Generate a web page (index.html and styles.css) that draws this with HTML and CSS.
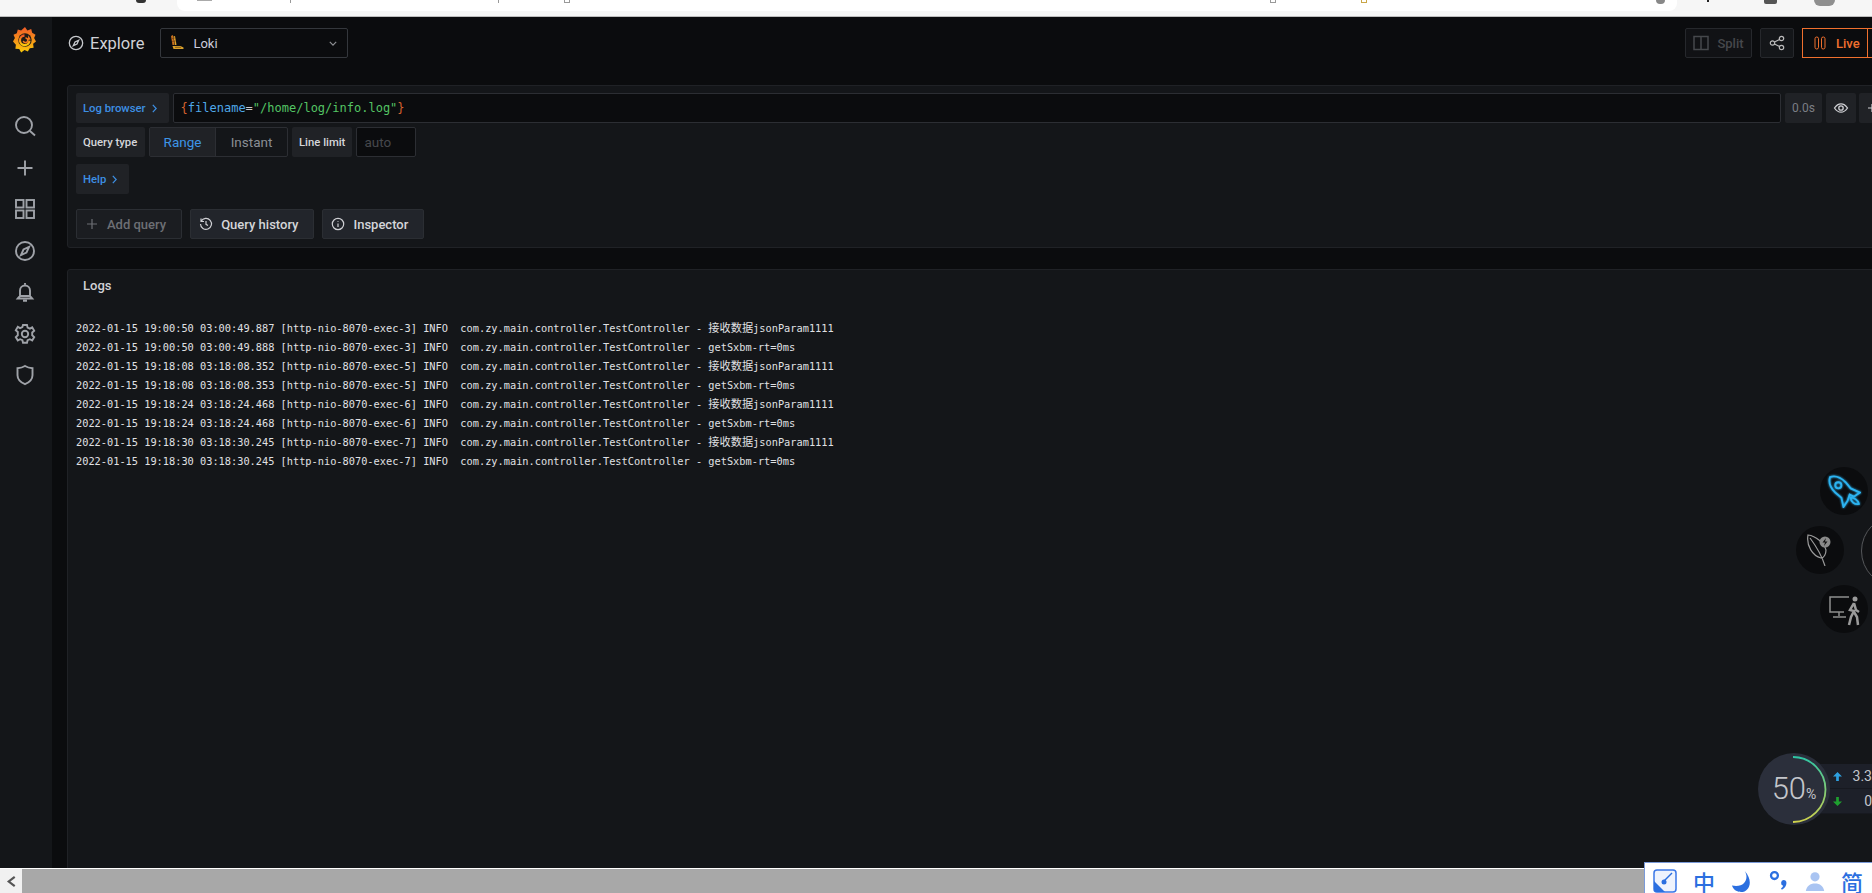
FILE: index.html
```html
<!DOCTYPE html>
<html lang="en">
<head>
<meta charset="utf-8">
<title>Explore - Grafana</title>
<link rel="stylesheet" href="styles.css">
</head>
<body>
<div class="chrome">
  <div class="chrome-dot"></div>
  <div class="address">
    <span class="addr-mark"></span><span class="addr-tick t1"></span><span class="addr-tick t2"></span>
    <span class="addr-box b1"></span><span class="addr-box b2"></span><span class="addr-box b3"></span><span class="addr-round"></span>
  </div>
  <span class="end-tick"></span><span class="end-box"></span><span class="avatar"></span>
</div>
<div class="app">
  <nav class="sidebar">
    <svg class="logo" viewBox="0 0 24 27" width="23" height="26">
      <defs><linearGradient id="gf" x1="0" y1="1" x2="0" y2="0"><stop offset="0" stop-color="#fbca0a"/><stop offset="1" stop-color="#f05a28"/></linearGradient></defs>
      <path fill="url(#gf)" d="M12.500 0l2.500 3.500 4-1.500 1 4 3.500 2-1.500 3.500 2 3.500-3 2.500.5 4-4 .5-2 3.500-3.500-1.500-3.500 2.500-2-3.500-4-.5.500-4L0 15l2-3.500L.5 8 4 6.500 5 2.500l3.500 1.200z"/>
      <circle cx="12.500" cy="13.500" r="7" fill="#1e1b17"/>
      <path d="M12 8.800a5 5 0 1 0 5.200 5.400" fill="none" stroke="url(#gf)" stroke-width="2.400"/>
      <path d="M13 11.400a2.400 2.400 0 1 1-2.300 3" fill="none" stroke="#f5791f" stroke-width="1.600"/>
      <path d="M16 8.500l2.500 4.500-3 .5z" fill="#f5791f"/>
    </svg>
    <div class="side-icons">
      <svg class="side-icon" viewBox="0 0 24 24"><circle cx="11" cy="11" r="8"/><path d="M17 17l5 4.500"/></svg>
      <svg class="side-icon" viewBox="0 0 24 24"><path d="M12 4.500v15M4.500 12h15"/></svg>
      <svg class="side-icon" viewBox="0 0 24 24"><rect x="3" y="3" width="7.500" height="7.500"/><rect x="13.500" y="3" width="7.500" height="7.500"/><rect x="3" y="13.500" width="7.500" height="7.500"/><rect x="13.500" y="13.500" width="7.500" height="7.500"/></svg>
      <svg class="side-icon" viewBox="0 0 24 24"><circle cx="12" cy="12" r="9"/><path d="M16 8l-2.500 5.500L8 16l2.500-5.500z"/></svg>
      <svg class="side-icon" viewBox="0 0 24 24"><path d="M12 3v1.500M7 16v-5.500a5 5 0 0 1 10 0V16M4.800 18.500L7 16h10l2.200 2.500zM10 20.800h4"/></svg>
      <svg class="side-icon" viewBox="0 0 24 24"><circle cx="12" cy="12" r="3.200"/><path d="M10 3h4l.6 2.600 2.300 1 2.300-1.300 2 3.400-2 1.800v2.800l2 1.800-2 3.400-2.300-1.300-2.300 1-.6 2.600h-4l-.6-2.600-2.300-1-2.300 1.300-2-3.400 2-1.800V10L2.800 8.200l2-3.400 2.300 1.300 2.300-1z"/></svg>
      <svg class="side-icon" viewBox="0 0 24 24"><path d="M12 3c2.200 1.400 4.500 2 7.500 2.200v7c0 4-3 7-7.500 9-4.500-2-7.500-5-7.500-9v-7C7.500 5 9.800 4.400 12 3z"/></svg>
    </div>
  </nav>
  <main class="main">
    <header class="topbar">
      <div class="topbar-left">
        <svg class="explore-icon" viewBox="0 0 24 24"><circle cx="12" cy="12" r="10"/><path d="M16 8l-2.500 5.500L8 16l2.500-5.500z"/></svg>
        <span class="explore-title">Explore</span>
        <div class="ds-picker">
          <svg class="loki" viewBox="0 0 14 16" width="14" height="16">
            <path d="M1 1l2-1 1.500 10H2.500z" fill="#c9701e"/><path d="M3.500 1.500L5 1l1.500 9H5z" fill="#e3a52a"/>
            <path d="M2.500 11h8l3 1.500V14H3.500z" fill="#d9a02b"/><path d="M5 12.300h6" stroke="#6b4a16" stroke-width=".8"/>
            <path d="M1.800 3.500l3-.5M2.200 6.500l3.200-.5" stroke="#6b3a12" stroke-width=".7"/>
          </svg>
          <span class="ds-name">Loki</span>
          <svg class="ds-caret" viewBox="0 0 10 6" width="8" height="5"><path d="M1 1l4 4 4-4"/></svg>
        </div>
      </div>
      <div class="topbar-right">
        <div class="tb-btn split">
          <svg viewBox="0 0 16 16" width="16" height="16"><rect x="1" y="1.500" width="14" height="13"/><path d="M8 1.500v13"/></svg>
          <span>Split</span>
        </div>
        <div class="tb-btn share">
          <svg viewBox="0 0 16 16" width="16" height="16"><circle cx="3.500" cy="8" r="2.200"/><circle cx="12.500" cy="3.500" r="2.200"/><circle cx="12.500" cy="12.500" r="2.200"/><path d="M5.500 7l5-2.500M5.500 9l5 2.500"/></svg>
        </div>
        <div class="live">
          <svg viewBox="0 0 12 14" width="12" height="14"><rect x="1" y="1" width="3.500" height="12" rx="1.700"/><rect x="7.500" y="1" width="3.500" height="12" rx="1.700"/></svg>
          <span>Live</span>
        </div>
        <div class="live-more"></div>
      </div>
    </header>

    <section class="query-panel">
      <div class="q-row">
        <div class="chip link">Log browser <svg class="chev" viewBox="0 0 5 9" width="5" height="9"><path d="M.8.8L4.200 4.500.8 8.200"/></svg></div>
        <div class="editor"><span class="brace">{</span><span class="key">filename</span><span class="eq">=</span><span class="str">"/home/log/info.log"</span><span class="brace">}</span></div>
        <div class="chip time">0.0s</div>
        <div class="chip eye"><svg viewBox="0 0 16 16" width="16" height="16"><path d="M1.500 8C3.500 5 5.500 3.800 8 3.800S12.500 5 14.500 8C12.500 11 10.500 12.200 8 12.200S3.500 11 1.500 8z"/><circle cx="8" cy="8" r="2.200"/></svg></div>
        <div class="chip plus-cut"><svg viewBox="0 0 10 10" width="10" height="10"><path d="M5 1v8M1 5h8"/></svg></div>
      </div>
      <div class="q-row">
        <div class="chip label">Query type</div>
        <div class="segment"><span class="seg active">Range</span><span class="seg">Instant</span></div>
        <div class="chip label">Line limit</div>
        <div class="limit">auto</div>
      </div>
      <div class="q-row">
        <div class="chip link">Help <svg class="chev" viewBox="0 0 5 9" width="5" height="9"><path d="M.8.8L4.200 4.500.8 8.200"/></svg></div>
      </div>
      <div class="q-actions">
        <div class="act disabled"><svg viewBox="0 0 14 14" width="14" height="14"><path d="M7 2v10M2 7h10"/></svg>Add query</div>
        <div class="act"><svg viewBox="0 0 14 14" width="14" height="14"><path d="M2.200 4.200A5.500 5.500 0 1 1 1.500 7M2 1.500v3h3M7 4v3.300l2 1.200"/></svg>Query history</div>
        <div class="act"><svg viewBox="0 0 14 14" width="14" height="14"><circle cx="7" cy="7" r="5.700"/><path d="M7 6.500V10M7 4v.8"/></svg>Inspector</div>
      </div>
    </section>

    <section class="logs-panel">
      <h2 class="logs-title">Logs</h2>
      <div class="log-lines">
        <div class="log-line">2022-01-15 19:00:50 03:00:49.887 [http-nio-8070-exec-3] INFO  com.zy.main.controller.TestController - <span class="cjk">接收数据</span>jsonParam1111</div>
        <div class="log-line">2022-01-15 19:00:50 03:00:49.888 [http-nio-8070-exec-3] INFO  com.zy.main.controller.TestController - getSxbm-rt=0ms</div>
        <div class="log-line">2022-01-15 19:18:08 03:18:08.352 [http-nio-8070-exec-5] INFO  com.zy.main.controller.TestController - <span class="cjk">接收数据</span>jsonParam1111</div>
        <div class="log-line">2022-01-15 19:18:08 03:18:08.353 [http-nio-8070-exec-5] INFO  com.zy.main.controller.TestController - getSxbm-rt=0ms</div>
        <div class="log-line">2022-01-15 19:18:24 03:18:24.468 [http-nio-8070-exec-6] INFO  com.zy.main.controller.TestController - <span class="cjk">接收数据</span>jsonParam1111</div>
        <div class="log-line">2022-01-15 19:18:24 03:18:24.468 [http-nio-8070-exec-6] INFO  com.zy.main.controller.TestController - getSxbm-rt=0ms</div>
        <div class="log-line">2022-01-15 19:18:30 03:18:30.245 [http-nio-8070-exec-7] INFO  com.zy.main.controller.TestController - <span class="cjk">接收数据</span>jsonParam1111</div>
        <div class="log-line">2022-01-15 19:18:30 03:18:30.245 [http-nio-8070-exec-7] INFO  com.zy.main.controller.TestController - getSxbm-rt=0ms</div>
      </div>
    </section>
  </main>
</div>

<div class="float rocket">
  <svg viewBox="0 0 32 32" width="33" height="33"><path d="M2 2C8 0 13 3 17 7L22 13L31 17L25 21L21 19L19 25L15 31L13 22L7 17C3 13 0 8 2 2Z"/><circle cx="10" cy="10" r="3"/><path d="M22 22c3 0 7 2 8 6-4 1-8-2-8-6z"/></svg>
</div>
<div class="float leaf">
  <svg viewBox="0 0 32 32" width="32" height="32"><path class="leaf-s" d="M4 1C12 2 20 9 22 16C22 20 20 24 17 24C9 22 2 12 4 1zM6 4C12 12 18 22 21 32"/><circle class="leaf-f" cx="21" cy="8" r="5.500"/><path class="leaf-b" d="M22 4l-3.500 4.500h2.500l-1 3.500 3.500-4.500H21z"/></svg>
</div>
<div class="float walk">
  <svg viewBox="0 0 36 36" width="36" height="36"><path class="walk-s" d="M23 6H4v15h14M13 21v4M7 26h13"/><circle class="walk-f" cx="29" cy="8" r="2.500"/><path class="walk-s2" d="M28 12l-4 7 4 1-3 6-2 8M28 12l2 7 3 2M28 21l3 5 1 8"/></svg>
</div>
<div class="ring-edge"></div>

<div class="speed">
  <div class="speed-rows">
    <div class="speed-row"><svg class="arr up" viewBox="0 0 10 10" width="9" height="9"><path d="M5 0l5 5H6.500v5h-3V5H0z"/></svg><span class="val">3.3</span></div>
    <div class="speed-row"><svg class="arr down" viewBox="0 0 10 10" width="9" height="9"><path d="M5 10L0 5h3.500V0h3v5H10z"/></svg><span class="val">0</span></div>
  </div>
  <div class="gauge">
    <svg class="gauge-arc" viewBox="0 0 72 72" width="72" height="72">
      <defs><linearGradient id="ga" x1="0" y1="0" x2="0" y2="1"><stop offset="0" stop-color="#2fc5a4"/><stop offset="1" stop-color="#cfd24c"/></linearGradient></defs>
      <path d="M35 4a32.500 32.500 0 0 1 0 65" fill="none" stroke="url(#ga)" stroke-width="1.800"/>
    </svg>
    <span class="pct">50</span><span class="pct-sign">%</span>
  </div>
</div>

<footer class="bottom">
  <div class="scroll">
    <div class="scroll-btn"><svg viewBox="0 0 12 14" width="11" height="13"><path d="M9.500 2L3 7l6.500 5"/></svg></div>
    <div class="scroll-track"></div>
  </div>
  <div class="ime">
    <svg class="ime-i" viewBox="0 0 24 24" width="24" height="24"><rect x="1" y="1" width="22" height="22" rx="3" class="ime-box"/><path d="M1 12l11 11H4a3 3 0 0 1-3-3z" class="ime-fill"/><path d="M10 13l9-9" class="ime-line"/><circle cx="11" cy="13" r="2.500" class="ime-dot"/></svg>
    <span class="ime-t">中</span>
    <svg class="ime-i" viewBox="0 0 24 24" width="22" height="22"><path class="ime-dot" d="M15 1C20 9 15 20 1 17C3 23 8 24 11 24C20 24 25 12 15 1z"/></svg>
    <svg class="ime-i" viewBox="0 0 22 24" width="20" height="22"><circle class="ime-ring" cx="6" cy="6" r="3.800"/><path class="ime-dot" d="M16 11a3.200 3.200 0 0 1 3.200 3.200c0 3-2.200 6-5 7.300l-1-1.300c1.300-.9 2-2 2.300-3A3.200 3.200 0 0 1 16 11z"/></svg>
    <svg class="ime-i" viewBox="0 0 24 24" width="20" height="22"><circle cx="12" cy="7" r="5.500" class="ime-soft"/><path class="ime-soft" d="M1 24c1-6 5-9 11-9s10 3 11 9z"/></svg>
    <span class="ime-t">简</span>
  </div>
</footer>
</body>
</html>
```
FILE: styles.css
```css
* { box-sizing: border-box; }
html, body { margin: 0; height: 893px; overflow: hidden; }
body {
  background: #0b0c0e;
  font-family: Roboto, "Noto Sans", "Liberation Sans", sans-serif;
  color: #ccccdc;
  display: flex;
  flex-direction: column;
  position: relative;
}
.chrome {
  height: 17px;
  flex: none;
  background: #f6f6f6;
  border-bottom: 1px solid #bdbdbd;
  display: flex;
  align-items: flex-start;
}
.chrome-dot {
  width: 10px; height: 3px; margin-left: 136px;
  background: #333; border-radius: 0 0 5px 5px;
}
.address {
  width: 1500px; height: 11px; margin-left: 31px;
  background: #fff; border-radius: 0 0 8px 8px;
  display: flex; align-items: flex-start; padding-left: 20px;
}
.addr-mark { width: 15px; height: 1px; background: #aaa; }
.addr-tick { width: 1px; height: 3px; background: #999; }
.t1 { margin-left: 78px; }
.t2 { margin-left: 207px; }
.addr-box { width: 6px; height: 3px; border: 1px solid #999; border-top: 0; }
.b1 { margin-left: 65px; }
.b2 { margin-left: 700px; }
.b3 { margin-left: 85px; border-color: #c9a648; }
.addr-round { width: 9px; height: 4px; background: #888; border-radius: 0 0 5px 5px; margin-left: 289px; }
.end-tick { width: 2px; height: 2px; background: #222; margin-left: 30px; }
.end-box { width: 13px; height: 4px; background: #555; border-radius: 0 0 2px 2px; margin-left: 55px; }
.avatar { width: 21px; height: 6px; background: #8f8f8f; border-radius: 0 0 11px 11px; margin-left: 37px; }

.app { flex: 1; display: flex; min-height: 0; }
.sidebar {
  width: 52px; flex: none;
  background: #141619;
  display: flex; flex-direction: column; align-items: center;
  padding-top: 10px;
}
.logo { flex: none; margin-left: -3px; }
.side-icons { display: flex; flex-direction: column; align-items: center; gap: 17.500px; margin-top: 61px; }
.side-icon { width: 24px; height: 24px; fill: none; stroke: #9fa2a8; stroke-width: 1.900; margin-left: -2px; flex: none; }

.main { flex: 1; min-width: 0; padding: 0 0 0 15px; overflow: hidden; }
.topbar { height: 68px; display: flex; justify-content: space-between; align-items: flex-start; padding-top: 11px; }
.topbar-left { display: flex; align-items: center; height: 30px; }
.explore-icon { width: 16px; height: 16px; fill: none; stroke: #c6c8cc; stroke-width: 2; margin-left: 1px; }
.explore-title { font-size: 16.500px; margin-left: 6px; color: #d0d1d6; }
.ds-picker {
  width: 188px; height: 30px; margin-left: 16px;
  background: #0b0c0e; border: 1px solid #34373c; border-radius: 2px;
  display: flex; align-items: center; padding: 0 10px 0 9px;
}
.ds-name { font-size: 13px; margin-left: 9px; color: #ccccdc; flex: 1; }
.ds-caret { fill: none; stroke: #8e9094; stroke-width: 1.500; }
.topbar-right { display: flex; align-items: center; gap: 8px; height: 30px; margin-right: -26px; flex: none; }
.tb-btn {
  height: 30px; border: 1px solid #26282c; border-radius: 2px;
  background: #141619; display: flex; align-items: center; justify-content: center;
}
.tb-btn svg { fill: none; stroke: #bbb; stroke-width: 1.200; }
.split { width: 67px; gap: 8px; color: #46484c; font-size: 13px; font-weight: 500; background: #111215; }
.split svg { stroke: #46484c; stroke-width: 1.500; }
.share { width: 34px; }
.live {
  width: 66px; height: 30px;
  border: 1px solid #f0702e; display: flex; align-items: center; gap: 10px; padding-left: 11px;
  color: #f0702e; font-size: 13px; font-weight: 500;
}
.live svg { fill: none; stroke: #f0702e; stroke-width: 1; flex: none; }
.live-more { width: 30px; height: 30px; border: 1px solid #f0702e; border-left: 0; margin-left: -8px; }

.query-panel {
  height: 163px; background: #141619; border: 1px solid #202226; border-radius: 3px;
  padding: 7px 8px 0; margin-right: -16px;
}
.q-row { display: flex; gap: 4px; height: 30px; margin-bottom: 4px; }
.q-row:nth-child(2) { margin-bottom: 7px; }
.chip {
  display: flex; align-items: center; height: 30px; padding: 0 7px;
  background: #202226; border-radius: 2px;
  font-size: 11.300px; font-weight: 500; white-space: nowrap; color: #d5d6da;
}
.chip.link { color: #3d8fe3; gap: 6px; padding-right: 12px; }
.chev { fill: none; stroke: #3d8fe3; stroke-width: 1.200; flex: none; }
.label:first-child { width: 69px; }
.editor {
  flex: 1; height: 30px; background: #0b0c0e; border: 1px solid #2c2e33; border-radius: 2px;
  font: 12px "DejaVu Sans Mono", monospace;
  display: flex; align-items: center; padding-left: 7px;
}
.brace { color: #d8622e; }
.key { color: #4fa8e8; }
.eq { color: #c8c9ce; }
.str { color: #54c464; }
.time { color: #7b7e84; font-size: 12px; font-weight: 400; width: 37px; justify-content: center; padding: 0; }
.eye { width: 30px; justify-content: center; padding: 0; margin-right: -1px; }
.eye svg { fill: none; stroke: #cfd0d4; stroke-width: 1.300; }
.plus-cut { width: 20px; padding: 0 0 0 8px; }
.plus-cut svg { fill: none; stroke: #cfd0d4; stroke-width: 1.200; flex: none; }
.segment { display: flex; height: 30px; border: 1px solid #2c2e33; border-radius: 2px; }
.seg { display: flex; align-items: center; justify-content: center; width: 71px; font-size: 13.500px; color: #8a8e94; }
.seg.active { width: 66px; background: #202226; color: #3d95e6; border-right: 1px solid #2c2e33; }
.limit {
  width: 60px; height: 30px; background: #0b0c0e; border: 1px solid #2c2e33; border-radius: 2px;
  display: flex; align-items: center; padding-left: 7px; font-size: 13.500px; color: #46484c;
}
.q-actions { display: flex; gap: 8px; margin-top: 15px; }
.act {
  height: 30px; background: #22252b; border: 1px solid #2b2e33; border-radius: 2px;
  display: flex; align-items: center; gap: 8px; padding: 0 15px 0 8px;
  font-size: 13px; font-weight: 500; color: #d4d5d9;
}
.act svg { fill: none; stroke: #cfd0d4; stroke-width: 1.200; }
.act.disabled { color: #6d6f74; background: #1b1d21; }
.act.disabled svg { stroke: #6d6f74; }

.logs-panel {
  height: 640px; margin-top: 21px; margin-right: -16px;
  background: #141619; border: 1px solid #202226; border-radius: 3px;
  padding: 0 8px;
}
.logs-title { margin: 6px 0 0 7px; font-size: 13px; line-height: 20px; font-weight: 500; color: #d0d1d6; }
.log-lines { margin-top: 23px; }
.log-line {
  font: 10.300px/19px "DejaVu Sans Mono", "Noto Sans CJK SC", monospace;
  white-space: pre; color: #e0e1e4;
}
.cjk { font-size: 11.200px; }

.float {
  position: absolute; width: 48px; height: 48px; border-radius: 50%;
  background: #0b0c0e; display: flex; align-items: center; justify-content: center;
}
.rocket { left: 1820px; top: 467px; }
.rocket svg { fill: none; stroke: #2cb3f0; stroke-width: 1.800; filter: drop-shadow(0 0 1px #2cb3f0); }
.leaf { left: 1796px; top: 526px; }
.leaf-s { fill: none; stroke: #9c9c9c; stroke-width: 1.200; }
.leaf-f { fill: #8a8a8a; }
.leaf-b { fill: #111; }
.walk { left: 1820px; top: 585px; }
.walk-s { fill: none; stroke: #8f8f8f; stroke-width: 1.500; }
.walk-f { fill: #9a9a9a; }
.walk-s2 { fill: none; stroke: #9a9a9a; stroke-width: 2.500; }
.ring-edge {
  position: absolute; left: 1861px; top: 515px; width: 72px; height: 72px;
  border: 1px solid #55575a; border-radius: 50%; background: #111214;
}

.speed { position: absolute; left: 1758px; top: 753px; width: 114px; height: 73px; }
.speed-rows {
  position: absolute; left: 59px; top: 11px; width: 55px; height: 50px;
  background: #1d2029;
  display: flex; flex-direction: column;
}
.speed-row { flex: 1; display: flex; align-items: center; padding-left: 16px; gap: 8px; font-size: 14px; color: #c4c6cb; border-bottom: 1px solid #171920; }
.val { flex: 1; text-align: right; white-space: nowrap; }
.arr { flex: none; }
.arr.up { fill: #2ea0e0; }
.arr.down { fill: #1fa02f; }
.gauge {
  position: absolute; left: 0; top: 0; width: 72px; height: 72px; border-radius: 50%;
  background: #2b2f3b; display: flex; align-items: baseline; justify-content: center;
  padding-top: 19px; color: #c4c6cb;
}
.gauge-arc { position: absolute; left: 0; top: 0; }
.pct { font-size: 31px; line-height: 34px; font-weight: 300; }
.pct-sign { font-size: 14px; }

.bottom { height: 25px; flex: none; display: flex; background: #fff; position: relative; border-top: 1px solid #fff; }
.scroll { flex: 1; display: flex; }
.scroll-btn { width: 22px; background: #f1f1f1; display: flex; align-items: center; justify-content: center; }
.scroll-btn svg { fill: none; stroke: #555; stroke-width: 2.400; }
.scroll-track { flex: 1; background: #a8a8a8; }
.ime {
  position: absolute; right: 0; bottom: 0; width: 228px; height: 31px;
  background: #fff; border: 1px solid #7a9ad8; border-right: 0; border-bottom: 0;
  display: flex; align-items: center; gap: 16px; padding: 5px 0 0 8px;
}
.ime-t { color: #2b6fe0; font: 500 22px/24px "Noto Sans CJK SC", sans-serif; }
.ime-i { flex: none; }
.ime-box { fill: #eef3fd; stroke: #3b78e7; stroke-width: 1.500; }
.ime-fill { fill: #2b6fe0; }
.ime-line { stroke: #2b6fe0; stroke-width: 1.500; fill: none; }
.ime-dot { fill: #2b6fe0; }
.ime-ring { fill: none; stroke: #2b6fe0; stroke-width: 2.500; }
.ime-soft { fill: #a9c4f2; }
```
